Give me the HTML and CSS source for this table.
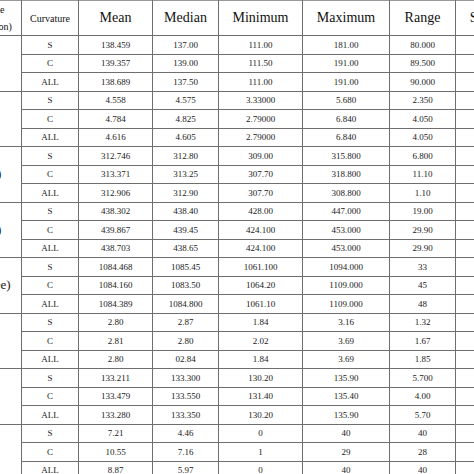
FILE: index.html
```html
<!DOCTYPE html>
<html>
<head>
<meta charset="utf-8">
<link rel="stylesheet" href="styles.css">
</head>
<body>
<table class="stats">
  <colgroup>
    <col class="c-param"><col class="c-curv"><col class="c-mean"><col class="c-median"><col class="c-min"><col class="c-max"><col class="c-range"><col class="c-sd">
  </colgroup>
  <thead>
    <tr>
      <th class="param-head">Dimension Type<br>(Spatial Dimension)</th>
      <th class="curv-head">Curvature</th>
      <th>Mean</th>
      <th>Median</th>
      <th>Minimum</th>
      <th>Maximum</th>
      <th>Range</th>
      <th>Std. Dev.</th>
    </tr>
  </thead>
  <tbody>
    <tr class="g-start"><td class="param" rowspan="3">Weight (g)</td><td>S</td><td>138.459</td><td>137.00</td><td>111.00</td><td>181.00</td><td>80.000</td><td></td></tr>
    <tr><td>C</td><td>139.357</td><td>139.00</td><td>111.50</td><td>191.00</td><td>89.500</td><td></td></tr>
    <tr><td>ALL</td><td>138.689</td><td>137.50</td><td>111.00</td><td>191.00</td><td>90.000</td><td></td></tr>

    <tr class="g-start"><td class="param" rowspan="3">Ratio</td><td>S</td><td>4.558</td><td>4.575</td><td>3.33000</td><td>5.680</td><td>2.350</td><td></td></tr>
    <tr><td>C</td><td>4.784</td><td>4.825</td><td>2.79000</td><td>6.840</td><td>4.050</td><td></td></tr>
    <tr><td>ALL</td><td>4.616</td><td>4.605</td><td>2.79000</td><td>6.840</td><td>4.050</td><td></td></tr>

    <tr class="g-start"><td class="param" rowspan="3">Width (cm)</td><td>S</td><td>312.746</td><td>312.80</td><td>309.00</td><td>315.800</td><td>6.800</td><td></td></tr>
    <tr><td>C</td><td>313.371</td><td>313.25</td><td>307.70</td><td>318.800</td><td>11.10</td><td></td></tr>
    <tr><td>ALL</td><td>312.906</td><td>312.90</td><td>307.70</td><td>308.800</td><td>1.10</td><td></td></tr>

    <tr class="g-start"><td class="param" rowspan="3">Depth (cm)</td><td>S</td><td>438.302</td><td>438.40</td><td>428.00</td><td>447.000</td><td>19.00</td><td></td></tr>
    <tr><td>C</td><td>439.867</td><td>439.45</td><td>424.100</td><td>453.000</td><td>29.90</td><td></td></tr>
    <tr><td>ALL</td><td>438.703</td><td>438.65</td><td>424.100</td><td>453.000</td><td>29.90</td><td></td></tr>

    <tr class="g-start"><td class="param" rowspan="3">Angle (degree)</td><td>S</td><td>1084.468</td><td>1085.45</td><td>1061.100</td><td>1094.000</td><td>33</td><td></td></tr>
    <tr><td>C</td><td>1084.160</td><td>1083.50</td><td>1064.20</td><td>1109.000</td><td>45</td><td></td></tr>
    <tr><td>ALL</td><td>1084.389</td><td>1084.800</td><td>1061.10</td><td>1109.000</td><td>48</td><td></td></tr>

    <tr class="g-start"><td class="param" rowspan="3">Index</td><td>S</td><td>2.80</td><td>2.87</td><td>1.84</td><td>3.16</td><td>1.32</td><td></td></tr>
    <tr><td>C</td><td>2.81</td><td>2.80</td><td>2.02</td><td>3.69</td><td>1.67</td><td></td></tr>
    <tr><td>ALL</td><td>2.80</td><td>02.84</td><td>1.84</td><td>3.69</td><td>1.85</td><td></td></tr>

    <tr class="g-start"><td class="param" rowspan="3">Girth (cm)</td><td>S</td><td>133.211</td><td>133.300</td><td>130.20</td><td>135.90</td><td>5.700</td><td></td></tr>
    <tr><td>C</td><td>133.479</td><td>133.550</td><td>131.40</td><td>135.40</td><td>4.00</td><td></td></tr>
    <tr><td>ALL</td><td>133.280</td><td>133.350</td><td>130.20</td><td>135.90</td><td>5.70</td><td></td></tr>

    <tr class="g-start"><td class="param" rowspan="3">Score</td><td>S</td><td>7.21</td><td>4.46</td><td>0</td><td>40</td><td>40</td><td></td></tr>
    <tr><td>C</td><td>10.55</td><td>7.16</td><td>1</td><td>29</td><td>28</td><td></td></tr>
    <tr><td>ALL</td><td>8.87</td><td>5.97</td><td>0</td><td>40</td><td>40</td><td></td></tr>
  </tbody>
</table>
</body>
</html>
```
FILE: styles.css
```css
html, body {
  margin: 0;
  padding: 0;
  background: #fff;
  overflow: hidden;
}

.stats {
  margin-left: -79px;
  border-collapse: collapse;
  table-layout: fixed;
  width: 614px;
  font-family: "Liberation Serif", "Times New Roman", serif;
  color: #1a1a1a;
}

.c-param { width: 100px; }
.c-curv { width: 57px; }
.c-mean { width: 74px; }
.c-median { width: 66px; }
.c-min { width: 84px; }
.c-max { width: 87px; }
.c-range { width: 66px; }
.c-sd { width: 80px; }

.stats th,
.stats td {
  border: 1px solid #6e6e6e;
  text-align: center;
  vertical-align: middle;
  padding: 0;
  white-space: nowrap;
  overflow: hidden;
}

.stats th {
  height: 33px;
  font-size: 14px;
  font-weight: normal;
  color: #111;
  border-top-color: #999;
}

.stats .curv-head {
  font-size: 10px;
}

.stats .param-head {
  font-size: 10px;
  line-height: 17px;
}

.stats td {
  height: 17.5px;
  font-size: 9px;
  line-height: 10px;
}

.stats .param {
  font-size: 13px;
}

.stats tr.g-start td {
  border-top-color: #4a4a4a;
}
```
